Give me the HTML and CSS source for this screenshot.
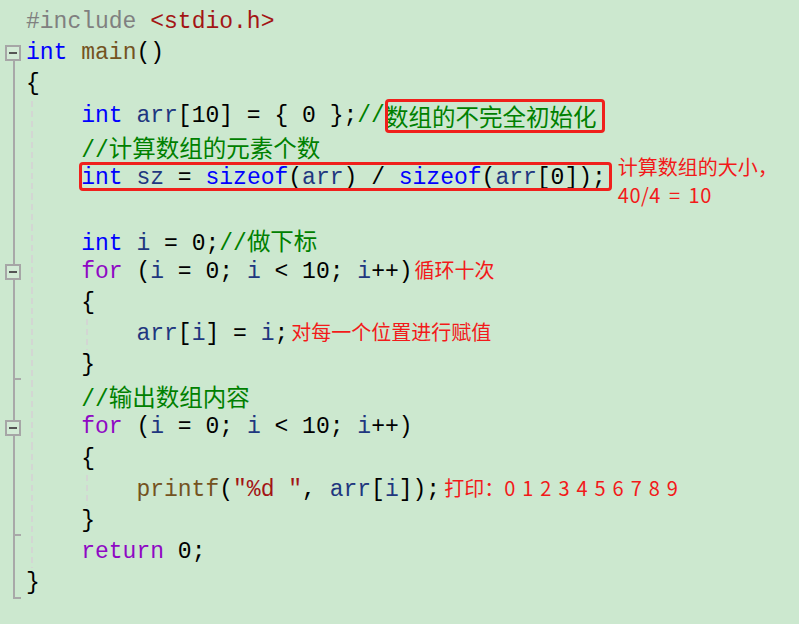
FILE: index.html
```html
<!DOCTYPE html>
<html lang="zh-CN">
<head>
<meta charset="utf-8">
<title>数组初始化示例</title>
<link rel="stylesheet" href="styles.css">
</head>
<body>
<div class="editor">
  <div class="row"><div class="gut"></div><div class="code"><span class="pp">#include</span> <span class="str">&lt;stdio.h&gt;</span></div></div>
  <div class="row"><div class="gut fold-top"><span class="box"></span></div><div class="code"><span class="kw">int</span> <span class="fn">main</span>()</div></div>
  <div class="row"><div class="gut vl"></div><div class="code">{</div></div>
  <div class="row"><div class="gut vl"></div><div class="code"><span class="ind g"></span><span class="kw">int</span> <span class="id">arr</span>[10] = { 0 };<span class="cm">//<span class="hl zh">数组的不完全初始化</span></span></div></div>
  <div class="row"><div class="gut vl"></div><div class="code"><span class="ind g"></span><span class="cm">//<span class="zh">计算数组的元素个数</span></span></div></div>
  <div class="row"><div class="gut vl"></div><div class="code"><span class="ind g"></span><span class="hl2"><span class="kw">int</span> <span class="id">sz</span> = <span class="kw">sizeof</span>(<span class="id">arr</span>) / <span class="kw">sizeof</span>(<span class="id">arr</span>[0]);</span><span class="note two">计算数组的大小，<br><span class="num">40/4 = 10</span></span></div></div>
  <div class="row"><div class="gut vl"></div><div class="code"><span class="ind g"></span></div></div>
  <div class="row"><div class="gut vl"></div><div class="code"><span class="ind g"></span><span class="kw">int</span> <span class="id">i</span> = 0;<span class="cm">//<span class="zh">做下标</span></span></div></div>
  <div class="row"><div class="gut vl"><span class="box"></span></div><div class="code"><span class="ind g"></span><span class="ctl">for</span> (<span class="id">i</span> = 0; <span class="id">i</span> &lt; 10; <span class="id">i</span>++)<span class="note n1">循环十次</span></div></div>
  <div class="row"><div class="gut vl"></div><div class="code"><span class="ind g"></span>{</div></div>
  <div class="row"><div class="gut vl"></div><div class="code"><span class="ind g"></span><span class="ind g"></span><span class="id">arr</span>[<span class="id">i</span>] = <span class="id">i</span>;<span class="note n2">对每一个位置进行赋值</span></div></div>
  <div class="row"><div class="gut tick"></div><div class="code"><span class="ind g"></span>}</div></div>
  <div class="row"><div class="gut vl"></div><div class="code"><span class="ind g"></span><span class="cm">//<span class="zh">输出数组内容</span></span></div></div>
  <div class="row"><div class="gut vl"><span class="box"></span></div><div class="code"><span class="ind g"></span><span class="ctl">for</span> (<span class="id">i</span> = 0; <span class="id">i</span> &lt; 10; <span class="id">i</span>++)</div></div>
  <div class="row"><div class="gut vl"></div><div class="code"><span class="ind g"></span>{</div></div>
  <div class="row"><div class="gut vl"></div><div class="code"><span class="ind g"></span><span class="ind g"></span><span class="fn">printf</span>(<span class="str">"%d "</span>, <span class="id">arr</span>[<span class="id">i</span>]);<span class="note n3">打印：<span class="digits">0 1 2 3 4 5 6 7 8 9</span></span></div></div>
  <div class="row"><div class="gut tick"></div><div class="code"><span class="ind g"></span>}</div></div>
  <div class="row"><div class="gut vl"></div><div class="code"><span class="ind g"></span><span class="ctl">return</span> 0;</div></div>
  <div class="row"><div class="gut tick"></div><div class="code">}</div></div>
</div>
</body>
</html>
```
FILE: styles.css
```css
html, body {
  margin: 0;
  padding: 0;
}
body {
  background: #cce8cf;
  width: 799px;
  height: 624px;
  overflow: hidden;
}
.editor {
  padding-top: 6px;
  font-family: "Liberation Mono", "Noto Sans CJK SC", monospace;
  font-size: 23px;
  color: #000;
}
.row {
  display: flex;
  height: 31.2px;
}
.gut {
  flex: none;
  width: 26px;
  height: 100%;
  display: flex;
  align-items: center;
}
.vl {
  background: linear-gradient(#a8a8a8, #a8a8a8) 13px 0 / 2px 100% no-repeat;
}
.fold-top {
  background: linear-gradient(#a8a8a8, #a8a8a8) 13px 100% / 2px 50% no-repeat;
}
.tick {
  background:
    linear-gradient(#a8a8a8, #a8a8a8) 13px 100% / 8px 2px no-repeat,
    linear-gradient(#a8a8a8, #a8a8a8) 13px 0 / 2px 100% no-repeat;
}
.box {
  margin: 1px 0 0 5px;
  width: 16px;
  height: 16px;
  box-sizing: border-box;
  border: 2px solid #a6a6a6;
  background: #d3ebd6;
  display: flex;
  align-items: center;
  justify-content: center;
}
.box::before {
  content: "";
  width: 8px;
  height: 2px;
  background: #555;
}
.code {
  white-space: pre;
  line-height: 31.2px;
  height: 31.2px;
  padding-top: 1px;
}
.ind {
  display: inline-block;
  width: 4ch;
  height: 31.2px;
  vertical-align: top;
}
.ind.g {
  background: repeating-linear-gradient(to bottom, #d3d6d3 0 6px, transparent 6px 10px) 5px 0 / 2px 100% no-repeat;
}
.kw { color: #0000ff; }
.ctl { color: #8f08c4; }
.fn { color: #74531f; }
.id { color: #1f377f; }
.cm { color: #008000; }
.pp { color: #808080; }
.str { color: #a31515; }
.zh {
  font-family: "Noto Sans CJK SC", sans-serif;
  font-size: 23.5px;
}
.hl {
  position: relative;
  display: inline-block;
  height: 31.2px;
  vertical-align: top;
}
.hl::after {
  content: "";
  position: absolute;
  top: -1.6px;
  bottom: -1.2px;
  left: 0;
  right: -9px;
  border: 3px solid #f0201c;
  border-radius: 4px;
}
.hl2 {
  position: relative;
  display: inline-block;
  height: 31.2px;
  vertical-align: top;
}
.hl2::after {
  content: "";
  position: absolute;
  top: -1px;
  bottom: 3px;
  left: -2px;
  right: -6px;
  border: 3px solid #f0201c;
  border-radius: 4px;
}
.note {
  font-family: "Noto Sans CJK SC", sans-serif;
  font-size: 20px;
  line-height: 20px;
  color: #f21a1a;
}
.note.two {
  display: inline-block;
  vertical-align: top;
  line-height: 28px;
  margin: -9.5px 0 0 12px;
}
.note.n1 { margin-left: 2px; }
.note.n2 { margin-left: 3px; }
.note.n3 { margin-left: 4px; }
.digits { word-spacing: 2.5px; }
.num { word-spacing: 3px; letter-spacing: 0.5px; }
```
